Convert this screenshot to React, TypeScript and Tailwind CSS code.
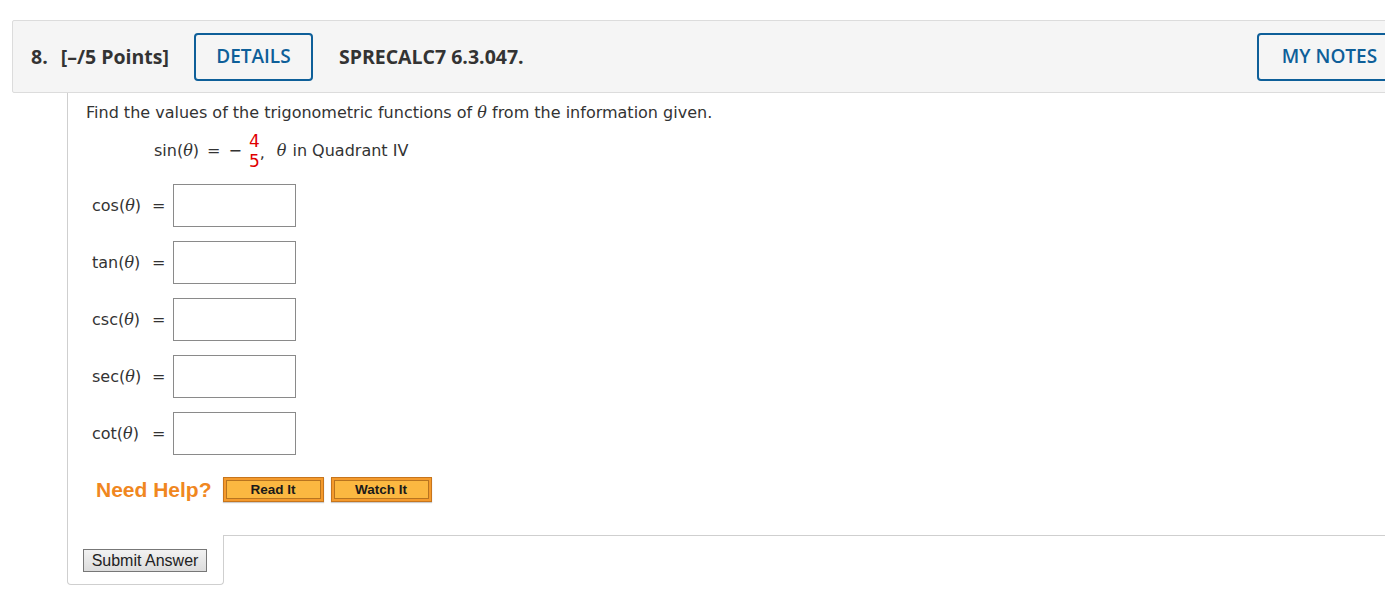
import React from 'react';

const rows = ['cos', 'tan', 'csc', 'sec', 'cot'];

const Theta = () => <span className="italic [font-family:'DejaVu_Serif','Liberation_Serif',serif]">θ</span>;

const HelpButton = ({ label }: { label: string }) => (
  <button className="h-[25px] w-[101px] border border-[#c7751c] bg-[#f49a2c] p-[2px] shadow-[0_1px_1px_rgba(0,0,0,0.2)]">
    <span className="flex h-full w-full items-center justify-center border border-[#b8741f] bg-[#fbb841] text-[13.5px] font-bold text-[#1a1a1a] [font-family:'Liberation_Sans',Arial,sans-serif]">
      {label}
    </span>
  </button>
);

export default function App() {
  return (
    <div className="w-full min-h-[604px] overflow-hidden bg-white pt-[20px] text-[#333] [font-family:'DejaVu_Sans',Verdana,sans-serif]">
      {/* question header */}
      <div className="ml-[12px] flex h-[73px] w-[1420px] items-center rounded-[2px] border border-[#dcdcdc] bg-[#f5f5f5] pl-[18px] text-[19.5px] font-bold text-[#333] [font-family:'Open_Sans',sans-serif]">
        <span>8.</span>
        <span className="ml-[13px]">[–/5 Points]</span>
        <button className="ml-[25px] flex h-[48px] w-[119px] items-center justify-center rounded-[4px] border-2 border-[#0e5f99] text-[19px] font-semibold text-[#0e5f99]">
          DETAILS
        </button>
        <span className="ml-[26px]">SPRECALC7 6.3.047.</span>
        <button className="ml-auto mr-[29px] flex h-[48px] w-[145px] items-center justify-center rounded-[4px] border-2 border-[#0e5f99] text-[19px] font-semibold text-[#0e5f99]">
          MY NOTES
        </button>
      </div>

      {/* question body */}
      <div className="ml-[67px]">
        <div className="border-l border-[#cfcfcf] pl-[18px] pt-[10px] pb-[29px]">
          <p className="text-[16px] leading-[20px] text-[#333]">
            Find the values of the trigonometric functions of <Theta /> from the information given.
          </p>
          <div className="ml-[68px] mt-[10px] flex h-[36px] items-center text-[16px] text-[#333]">
            <span>
              sin(<Theta />)
            </span>
            <span className="mx-[8px]">=</span>
            <span>−</span>
            <span className="ml-[7px] flex flex-col items-center gap-[3px] text-[17px] leading-[17px] text-[#e00000]">
              <span>4</span>
              <span>5</span>
            </span>
            <span className="mr-[12px] mt-[4px]">,</span>
            <Theta />
            <span className="ml-[6px]">in Quadrant IV</span>
          </div>

          <div className="mt-[15px] flex flex-col gap-[14px] pl-[6px]">
            {rows.map((r) => (
              <div key={r} className="flex items-center text-[16px] text-[#333]">
                <span className="w-[60px]">
                  {r}(<Theta />)
                </span>
                <span className="w-[21px]">=</span>
                <div className="h-[43px] w-[123px] border border-[#8a8a8a] bg-white" />
              </div>
            ))}
          </div>

          <div className="mt-[19px] ml-[10px] flex items-center">
            <span className="mr-[11px] text-[21px] font-bold text-[#f0871f] [font-family:'Liberation_Sans',Arial,sans-serif]">
              Need Help?
            </span>
            <div className="flex gap-[7px]">
              <HelpButton label="Read It" />
              <HelpButton label="Watch It" />
            </div>
          </div>
        </div>

        {/* submit row */}
        <div className="flex">
          <div className="flex h-[50px] w-[157px] items-start rounded-b-[4px] border-x border-b border-[#cfcfcf] pl-[15px] pt-[14px]">
            <button className="h-[23px] w-[124px] border border-[#777] bg-gradient-to-b from-[#f2f2f2] to-[#dcdcdc] text-[16px] leading-[21px] text-[#222] [font-family:'Liberation_Sans',Arial,sans-serif]">
              Submit Answer
            </button>
          </div>
          <div className="flex-1 border-t border-[#cfcfcf]" />
        </div>
      </div>
    </div>
  );
}
